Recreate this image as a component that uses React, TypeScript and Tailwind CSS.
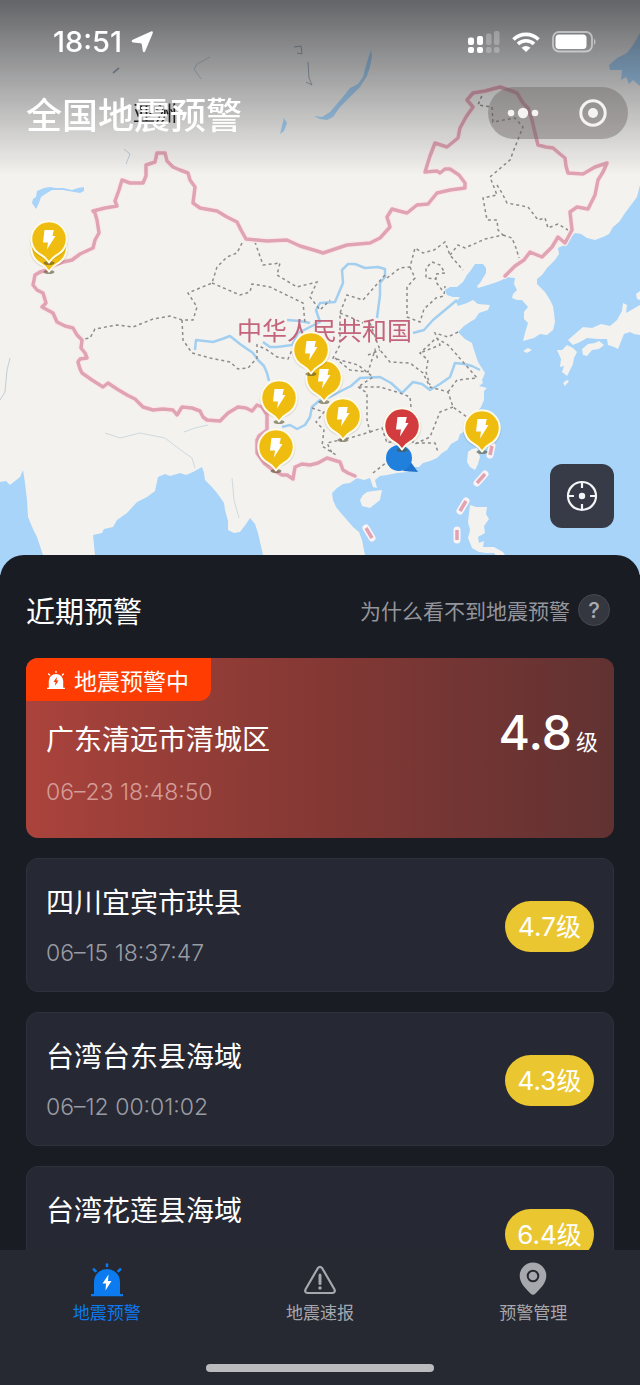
import type { ReactNode } from 'react';

interface Alert {
  id: string;
  place: string;
  time?: string;
  magnitude: string;
}

interface PinPosition {
  x: number;
  y: number;
  active?: boolean;
}

const ACTIVE_ALERT: Alert = {
  id: 'qingyuan',
  place: '广东清远市清城区',
  time: '06–23 18:48:50',
  magnitude: '4.8',
};

const ALERTS: Alert[] = [
  { id: 'gongxian', place: '四川宜宾市珙县', time: '06–15 18:37:47', magnitude: '4.7' },
  { id: 'taitung', place: '台湾台东县海域', time: '06–12 00:01:02', magnitude: '4.3' },
  { id: 'hualien', place: '台湾花莲县海域', magnitude: '6.4' },
];

const PINS: PinPosition[] = [
  { x: 49, y: 248 },
  { x: 49, y: 239 },
  { x: 324, y: 378 },
  { x: 311, y: 350 },
  { x: 279, y: 398 },
  { x: 276, y: 447 },
  { x: 343, y: 416 },
  { x: 402, y: 426, active: true },
  { x: 482, y: 428 },
];

const WATER = [
  // east and south china seas
  'M640 185L637 197L631 205L625 213L619 222L613 227L609 234L603 237L595 240L587 238L581 234L575 233L570 238L564 245L558 248L559 254L555 260L547 268L542 275L537 279L537 284L545 292L550 300L553 306L554 313L555 322L553 330L547 335L540 334L534 338L523 341L525 333L528 323L524 319L524 312L528 307L522 300L517 300L512 298L513 294L517 290L514 284L515 278L507 277L502 280L497 282L488 285L478 288L477 286L480 283L486 273L486 268L483 264L475 264L471 270L467 275L463 282L457 287L450 287L445 290L447 295L453 297L460 297L456 302L458 306L467 303L473 300L478 304L490 305L488 310L479 313L475 319L470 322L464 326L458 332L465 339L472 343L474 350L478 362L485 373L482 380L483 383L479 386L487 388L484 391L484 400L481 407L476 413L473 420L467 430L460 434L458 440L451 444L447 450L442 453L437 458L430 461L423 463L419 467L413 467L407 472L397 473L387 475L380 476L375 480L377 488L373 487L370 478L364 480L357 478L350 483L343 484L337 488L332 493L333 500L336 507L340 512L347 520L353 527L359 532L362 540L365 555L366 580L640 580Z',
  // bay of bengal
  'M95 580L95 555L93 535L102 533L104 529L113 527L117 520L127 513L137 502L147 497L155 491L158 477L165 474L170 476L180 473L186 475L193 472L202 467L204 473L205 480L211 486L217 493L222 500L224 503L225 510L228 521L228 530L234 533L240 532L246 524L250 518L255 524L258 533L263 555L265 580Z',
  // arabian sea
  'M0 482L6 481L10 485L20 477L23 470L25 483L27 500L28 517L33 529L37 537L43 555L46 580L0 580Z',
  // sea of okhotsk
  'M640 33L633 45L627 53L617 58L609 65L610 70L622 70L621 80L626 77L629 84L633 80L640 86Z',
  // lake baikal
  'M371 50L372 56L370 67L367 76L360 87L351 96L340 107L333 117L327 120L320 119L314 116L322 117L330 112L342 98L350 88L358 84L363 77L366 65Z',
  // lake balkhash
  'M36 209L32 203L33 199L36 197L37 191L44 188L50 187L56 188L63 188L72 190L78 188L84 187L84 191L80 193L74 192L63 190L52 190L47 193L41 197L39 203Z',
  'M284 118L287 123L284 131L280 134Z',
];

const ISLANDS = [
  'M360 500L363 495L367 492L373 491L382 490L380 500L375 504L370 508L362 506Z',
  'M468 452L472 449L477 448L480 457L478 464L475 470L470 467L467 462Z',
  'M470 505L476 507L487 507L486 514L489 519L484 526L485 533L478 537L479 543L484 541L483 547L494 547L503 552L508 560L500 562L494 553L486 553L479 552L472 548L468 538L470 530L468 522Z',
  'M557 350L562 350L567 345L573 348L577 352L574 358L573 364L567 376L562 372L564 366L560 367L561 359Z',
  'M568 340L576 333L583 327L592 328L601 324L610 326L617 320L622 311L623 303L627 305L626 313L633 309L640 305L640 335L634 334L630 332L624 334L622 339L618 349L614 347L608 345L607 339L598 339L587 338L580 342L573 345Z',
  'M582 349L588 344L595 343L599 341L604 345L599 349L592 350L587 356L583 355Z',
  'M523 351L528 348L532 350L527 353Z',
  'M636 294L640 291L640 300L637 299Z',
  'M563 383L567 380L569 381L565 386Z',
];

const BORDER = [
  'M47 270L54 265L63 262L72 260L80 254L93 248L95 240L99 233L97 220L95 213L93 211L105 208L117 206L115 201L119 190L122 180L130 183L143 183L146 176L146 165L155 162L157 153L165 153L167 161L173 167L180 170L188 173L190 180L195 187L193 203L200 208L217 211L227 217L237 222L241 230L246 239L267 241L287 240L300 246L317 251L323 253L335 249L347 245L370 243L380 238L390 227L387 217L392 209L399 211L407 213L417 205L428 204L437 193L450 190L465 188L465 183L459 175L450 169L445 169L440 173L437 171L425 172L430 156L435 143L447 147L458 138L460 128L466 117L473 107L467 100L473 93L485 91L500 87L509 90L517 93L523 103L528 108L532 120L535 133L538 145L546 147L553 148L560 154L565 158L566 166L568 173L583 174L595 167L607 163L603 172L598 180L595 195L588 209L577 207L570 212L572 230L565 243L558 237L552 247L542 257L530 252L524 260L515 266L505 276',
  'M47 270L40 272L35 275L33 285L37 290L43 293L46 303L42 307L53 313L57 322L65 326L73 328L77 335L82 340L81 348L85 353L87 358L80 359L78 362L80 369L82 373L92 380L103 387L108 383L117 389L127 395L135 399L143 407L153 410L163 409L173 410L177 415L182 407L192 408L200 411L203 417L207 420L220 421L228 413L238 407L246 408L252 411L257 405L262 407L267 415L267 430L259 436L257 440L257 453L264 463L273 470L282 475L287 475L293 479L295 467L302 464L310 465L318 463L327 458L340 462L343 470L348 473L355 476',
];

const SEA_DASHES = [
  'M492 446L490 455',
  'M485 474L477 483',
  'M466 501L460 511',
  'M457 530L457 540',
  'M366 528L372 538',
];

const PROVINCES = [
  'M242 243L237 253L227 257L217 267L212 283L188 293L197 307L193 320L182 320L170 316L153 319L133 327L117 325L95 329L90 338L83 339',
  'M182 320L183 340L192 353L210 358L230 362L238 369L248 368L257 358L257 345L267 350L277 357L288 359L292 350',
  'M212 283L240 295L250 292L252 284L270 287L303 303L305 323',
  'M255 242L263 265L280 263L277 275L297 287L317 282L310 297L320 310L330 300',
  'M387 278L400 268L410 267L415 248L423 253L434 250L445 242L450 255L463 270',
  'M450 255L458 245L465 248L485 239L503 235L498 230L497 220L487 220L483 198L497 195L490 177L510 160L515 147L523 127L515 118L493 122L492 107L478 105L483 93',
  'M497 185L502 193L507 203L528 207L538 220L545 218L548 228L558 224L568 230',
  'M503 235L512 238L516 248L519 258',
  'M410 267L415 278L407 287L407 317L420 322L424 309L436 298L444 296L445 286',
  'M442 290L436 282L436 274L445 273L440 265L432 262L426 268L426 278L436 279',
  'M385 275L363 300L347 295L340 313L340 345L333 358L358 365L373 377L358 387L380 387L400 393L410 397L412 417L413 443L435 443L438 452',
  'M370 323L380 350L390 362L410 363L423 373L430 387L448 392L453 407L467 417',
  'M368 355L380 350',
  'M453 407L440 412L430 437L415 444',
  'M448 392L457 380L477 378L470 370L457 355',
  'M457 355L448 345L436 338L430 344L420 353L428 360L426 372L430 385',
  'M458 332L448 337L435 333L440 345L420 353',
  'M340 313L352 318L363 323',
  'M358 387L367 393L367 420L370 432L353 437L327 443L333 455',
  'M370 432L382 428L387 443L397 440',
  'M373 473L387 462',
  'M312 408L324 412L316 422L324 430L322 446L336 455',
  'M335 358L350 370L368 372L375 350L378 360',
];

const RIVERS = [
  'M195 350L196 340L213 342L222 339L230 336L240 344L253 353L258 360L264 366L267 373L269 381',
  'M282 427L290 425L297 429L305 425L310 417L312 407L320 400L330 397L343 390L351 386L360 378L380 377L391 383L402 393L413 382L422 384L430 390L440 384L450 377L455 363L464 364L472 366L480 370',
  'M263 342L270 347L277 347L292 345L298 333L320 322L316 310L320 303L335 302L343 283L342 270L348 264L355 264L365 268L378 267L385 269L385 277L380 283L380 295L377 318',
  'M287 320L300 321L310 323',
  'M413 333L424 330L433 320L445 310L457 300',
];

function LightningPin({ x, y, active }: PinPosition): JSX.Element {
  return (
    <g transform={`translate(${x} ${y})`}>
      <circle cy="1" r="19.500" fill="#000" opacity="0.08" />
      <ellipse cy="24" rx="5.500" ry="2" fill="#55502f" opacity="0.6" />
      <path
        d="M-8 15.800Q-3 18.500 0 23.500Q3 18.500 8 15.800A17.700 17.700 0 1 0 -8 15.800Z"
        fill={active ? '#d23c3f' : '#efbd10'}
        stroke="#fffbe8"
        strokeWidth="2"
        strokeLinejoin="round"
      />
      <path d="M-4.500 -9H4.800L3.500 -3H6.500L-2 10.500L-1 3.500H-6Z" fill="#fff" />
    </g>
  );
}

function SeismicMap(): JSX.Element {
  return (
    <svg
      className="absolute inset-0 h-full w-full"
      viewBox="0 0 640 575"
      preserveAspectRatio="xMidYMin slice"
      role="img"
      aria-label="中华人民共和国"
    >
      <rect width="640" height="580" fill="#f3f2ef" />
      {WATER.map((d) => (
        <path key={d} d={d} fill="#a7d4f8" />
      ))}
      {ISLANDS.map((d) => (
        <path key={d} d={d} fill="#f3f2ef" />
      ))}
      <g fill="none" stroke="#a8bfcc" strokeWidth="1" opacity="0.7">
        <path d="M119 68L113 73" stroke="#7f93a5" strokeWidth="2" />
        <path d="M210 57L197 64L194 69L201 79" />
        <path d="M294 47L301 46L302 54L297 53M308 62L309 78L312 85L306 82" stroke="#7f93a5" />
        <path d="M124 149L130 154L126 164M0 400L5 392L7 370L10 358" />
        <path d="M105 433L120 438L140 433L165 438L178 448L192 458L195 468M184 432L195 428L208 425M232 478L234 500L239 518" opacity="0.7" />
      </g>
      {RIVERS.map((d) => (
        <path key={d} d={d} fill="none" stroke="#a2cff0" strokeWidth="2.500" strokeLinejoin="round" />
      ))}
      {PROVINCES.map((d) => (
        <path key={d} d={d} fill="none" stroke="#8e8c8c" strokeWidth="1.500" strokeDasharray="3 3" />
      ))}
      {BORDER.map((d) => (
        <g key={d} fill="none" strokeLinejoin="round" strokeLinecap="round">
          <path d={d} stroke="#fae9ec" strokeWidth="6" />
          <path d={d} stroke="#dfa3b1" strokeWidth="3.500" />
        </g>
      ))}
      {SEA_DASHES.map((d) => (
        <g key={d} fill="none" strokeLinecap="round">
          <path d={d} stroke="#fbf3f5" strokeWidth="7" />
          <path d={d} stroke="#dfa3b1" strokeWidth="3.500" strokeLinecap="butt" />
        </g>
      ))}
      <text x="133" y="121" fontSize="22" fill="#222">
        亚洲
      </text>
      <text x="237" y="340" fontSize="25" fill="#c4647a">
        中华人民共和国
      </text>
      <path d="M410 461L418 472L403 471Z" fill="#1f73cc" />
      <circle cx="399" cy="458" r="13" fill="#2080dc" />
      {PINS.map((pin) => (
        <LightningPin key={`${pin.x}-${pin.y}`} {...pin} />
      ))}
    </svg>
  );
}

function SirenIcon({ className, bolt }: { className: string; bolt: string }): JSX.Element {
  return (
    <svg className={className} viewBox="0 0 36 36" fill="currentColor" aria-hidden="true">
      <path d="M5 20A13 13 0 0 1 31 20V32H34V34.200H2V32H5Z" />
      <path
        d="M18 4V2.500M6.500 9L4.800 7.300M29.500 9L31.200 7.300"
        stroke="currentColor"
        strokeWidth="2.600"
        strokeLinecap="round"
      />
      <path d="M19.500 12.500L13.500 21.500H17L16.500 28.500L22.500 19H19Z" fill={bolt} />
    </svg>
  );
}

function WarningIcon(): JSX.Element {
  return (
    <svg className="size-9" viewBox="0 0 36 36" fill="none" stroke="currentColor" aria-hidden="true">
      <path
        d="M15.800 6.200L3.600 27.200Q2.200 30.500 5.600 31H30.400Q33.800 30.500 32.400 27.200L20.200 6.200Q18 3.500 15.800 6.200Z"
        strokeWidth="2.200"
        strokeLinejoin="round"
      />
      <path d="M18 13V21.500" strokeWidth="3" strokeLinecap="round" />
      <circle cx="18" cy="26" r="1.700" fill="currentColor" stroke="none" />
    </svg>
  );
}

function PlaceIcon(): JSX.Element {
  return (
    <svg className="size-9" viewBox="0 0 36 36" fill="none" aria-hidden="true">
      <path
        d="M18 .5A13.300 13.300 0 0 0 4.700 14C4.700 21 11 27 15.500 31.500Q18 34 20.500 31.500C25 27 31.300 21 31.300 14A13.300 13.300 0 0 0 18 .5Z"
        fill="currentColor"
      />
      <circle cx="18" cy="14" r="5.300" stroke="#262931" strokeWidth="2" />
    </svg>
  );
}

function StatusBar(): JSX.Element {
  return (
    <div className="flex h-9 items-center justify-between pr-11 pl-[53px]">
      <div className="flex items-center gap-2">
        <span className="font-[Inter] text-[29px] font-medium leading-9">18:51</span>
        <svg className="size-6" viewBox="0 0 24 24" fill="currentColor" aria-hidden="true">
          <path d="M21 1.500Q23.500 .8 22.700 3.300L15.300 21Q13.800 23.500 12.800 21L11.800 14.500Q11.500 13.300 10.500 13.200L3.200 12.500Q.3 11.500 2.700 9.800Z" />
        </svg>
      </div>
      <div className="flex items-center gap-3">
        <svg className="h-6 w-8" viewBox="0 0 32 24" fill="currentColor" aria-hidden="true">
          <rect x="0" y="7.500" width="6" height="7.500" rx="2" />
          <rect x="9" y="6" width="6" height="9" rx="2" />
          <rect x="0" y="17" width="6" height="6" rx="2" />
          <rect x="9" y="17" width="6" height="6" rx="2" />
          <g opacity="0.25">
            <rect x="18" y="3.500" width="5.500" height="11.500" rx="2" />
            <rect x="26" y="1" width="5.500" height="14" rx="2" />
            <rect x="18" y="17" width="5.500" height="6" rx="2" />
            <rect x="26" y="17" width="5.500" height="6" rx="2" />
          </g>
        </svg>
        <svg className="h-5 w-7" viewBox="0 0 28 20" aria-hidden="true">
          <g fill="none" stroke="currentColor" strokeWidth="3.600">
            <path d="M1.500 7.500A17.800 17.800 0 0 1 26.500 7.500" />
            <path d="M6 12A11.500 11.500 0 0 1 22 12" />
          </g>
          <path d="M14 20L9.500 15.700Q14 12.500 18.500 15.700Z" fill="currentColor" />
        </svg>
        <svg className="h-6 w-11" viewBox="0 0 44 24" aria-hidden="true">
          <rect x="1" y="2" width="39" height="19.500" rx="6" fill="none" stroke="currentColor" strokeWidth="1.800" opacity="0.5" />
          <rect x="3.500" y="4.500" width="31" height="14.500" rx="3.500" fill="currentColor" />
          <path d="M42 8.500Q45 11.700 42 15Z" fill="currentColor" opacity="0.5" />
        </svg>
      </div>
    </div>
  );
}

function ActiveAlertCard({ alert }: { alert: Alert }): JSX.Element {
  return (
    <li className="overflow-hidden rounded-xl bg-linear-to-r from-[#aa433c] via-[#843834] to-[#613232] pb-[30px]">
      <p className="flex h-[43px] w-fit items-center gap-2 rounded-br-xl bg-[#ff3d02] pr-[22px] pl-5">
        <SirenIcon className="size-5" bolt="#ff3d02" />
        <span className="text-[23px] leading-8">地震预警中</span>
      </p>
      <div className="mt-3 flex items-baseline justify-between pr-4 pl-5">
        <h3 className="text-[28px] leading-10">{alert.place}</h3>
        <p className="flex items-baseline gap-1 leading-10">
          <span className="font-[Inter] text-[48px] font-medium leading-10">{alert.magnitude}</span>
          <span className="text-[22px] leading-10">级</span>
        </p>
      </div>
      <time className="mt-4 block pl-5 font-[Inter] text-[23px] font-light leading-8 text-[#d39c97]">
        {alert.time}
      </time>
    </li>
  );
}

function AlertCard({ alert }: { alert: Alert }): JSX.Element {
  return (
    <li className="flex min-h-[134px] items-start justify-between rounded-xl border border-[#2e313b] bg-[#262833] px-[19px] pt-[22px] pb-5">
      <div>
        <h3 className="text-[28px] leading-10">{alert.place}</h3>
        {alert.time && (
          <time className="mt-4 block font-[Inter] text-[23px] font-light leading-8 text-[#9a9ca4]">
            {alert.time}
          </time>
        )}
      </div>
      <p className="flex h-[51px] min-w-[89px] items-center justify-center self-center rounded-full bg-[#eac730] px-3 text-[25px]">
        <span className="font-[Inter] text-[26px]">{alert.magnitude}</span>级
      </p>
    </li>
  );
}

function TabItem({ label, icon, active }: { label: string; icon: ReactNode; active?: boolean }): JSX.Element {
  return (
    <a
      href="#"
      aria-current={active ? 'page' : undefined}
      className={`flex flex-1 flex-col items-center gap-0.5 ${active ? 'text-[#0c7bf0]' : 'text-[#a6a8ad]'}`}
    >
      {icon}
      <span className="text-[17px] leading-6">{label}</span>
    </a>
  );
}

export default function App(): JSX.Element {
  return (
    <div className="flex h-screen flex-col bg-[#1a1c24] font-['Noto_Sans_CJK_SC',sans-serif] text-white">
      <main className="min-h-0 flex-1 overflow-y-auto [scrollbar-width:none]">
        <section className="relative flex h-[575px] flex-col justify-between">
          <SeismicMap />
          <header className="relative bg-linear-to-b from-[#16181f]/65 to-transparent pt-6 pb-9">
            <StatusBar />
            <div className="mt-[27px] flex items-center justify-between pr-3 pl-[26px]">
              <h1 className="text-[36px] font-medium leading-[52px]">全国地震预警</h1>
              <div className="flex h-[52px] w-[140px] items-center rounded-full bg-[#6c6565]/45">
                <button type="button" aria-label="更多" className="flex flex-1 justify-center">
                  <svg className="h-3 w-8" viewBox="0 0 32 12" fill="#f4f2f2" aria-hidden="true">
                    <circle cx="4" cy="6" r="3.300" />
                    <circle cx="16" cy="6" r="5.200" />
                    <circle cx="28" cy="6" r="3.300" />
                  </svg>
                </button>
                <button type="button" aria-label="关闭" className="flex flex-1 justify-center">
                  <svg className="size-7" viewBox="0 0 28 28" aria-hidden="true">
                    <circle cx="14" cy="14" r="12.200" fill="none" stroke="#f4f2f2" strokeWidth="3" />
                    <circle cx="14" cy="14" r="5" fill="#f4f2f2" />
                  </svg>
                </button>
              </div>
            </div>
          </header>
          <button
            type="button"
            aria-label="定位"
            className="relative mr-[26px] mb-[47px] flex size-16 items-center justify-center self-end rounded-xl bg-[#373b47]"
          >
            <svg className="size-8" viewBox="0 0 32 32" fill="none" stroke="#f4f5f7" strokeWidth="2.200" aria-hidden="true">
              <circle cx="16" cy="16" r="14" />
              <path d="M16 2V8M16 24V30M2 16H8M24 16H30" />
              <circle cx="16" cy="16" r="3.200" fill="#f4f5f7" stroke="none" />
            </svg>
          </button>
        </section>

        <section className="relative -mt-5 rounded-t-3xl bg-[#1a1c24] px-[26px] pt-[34px] pb-5">
          <div className="flex items-center justify-between">
            <h2 className="text-[29px] leading-[42px]">近期预警</h2>
            <a href="#" className="mr-1 flex items-center gap-2 text-[#94969c]">
              <span className="text-[21px] leading-8">为什么看不到地震预警</span>
              <span className="flex size-8 items-center justify-center rounded-full border border-[#464951] bg-[#343740] font-[Inter] text-[22px] font-medium text-[#a9abb1]">
                ?
              </span>
            </a>
          </div>
          <ul className="mt-[27px] flex flex-col gap-5">
            <ActiveAlertCard alert={ACTIVE_ALERT} />
            {ALERTS.map((alert) => (
              <AlertCard key={alert.id} alert={alert} />
            ))}
          </ul>
        </section>
      </main>

      <nav className="bg-[#262931] pt-3 pb-[13px]">
        <div className="flex">
          <TabItem label="地震预警" icon={<SirenIcon className="size-9" bolt="#fff" />} active />
          <TabItem label="地震速报" icon={<WarningIcon />} />
          <TabItem label="预警管理" icon={<PlaceIcon />} />
        </div>
        <div className="mx-auto mt-10 h-2 w-[228px] rounded-full bg-[#b9bbbc]" />
      </nav>
    </div>
  );
}
